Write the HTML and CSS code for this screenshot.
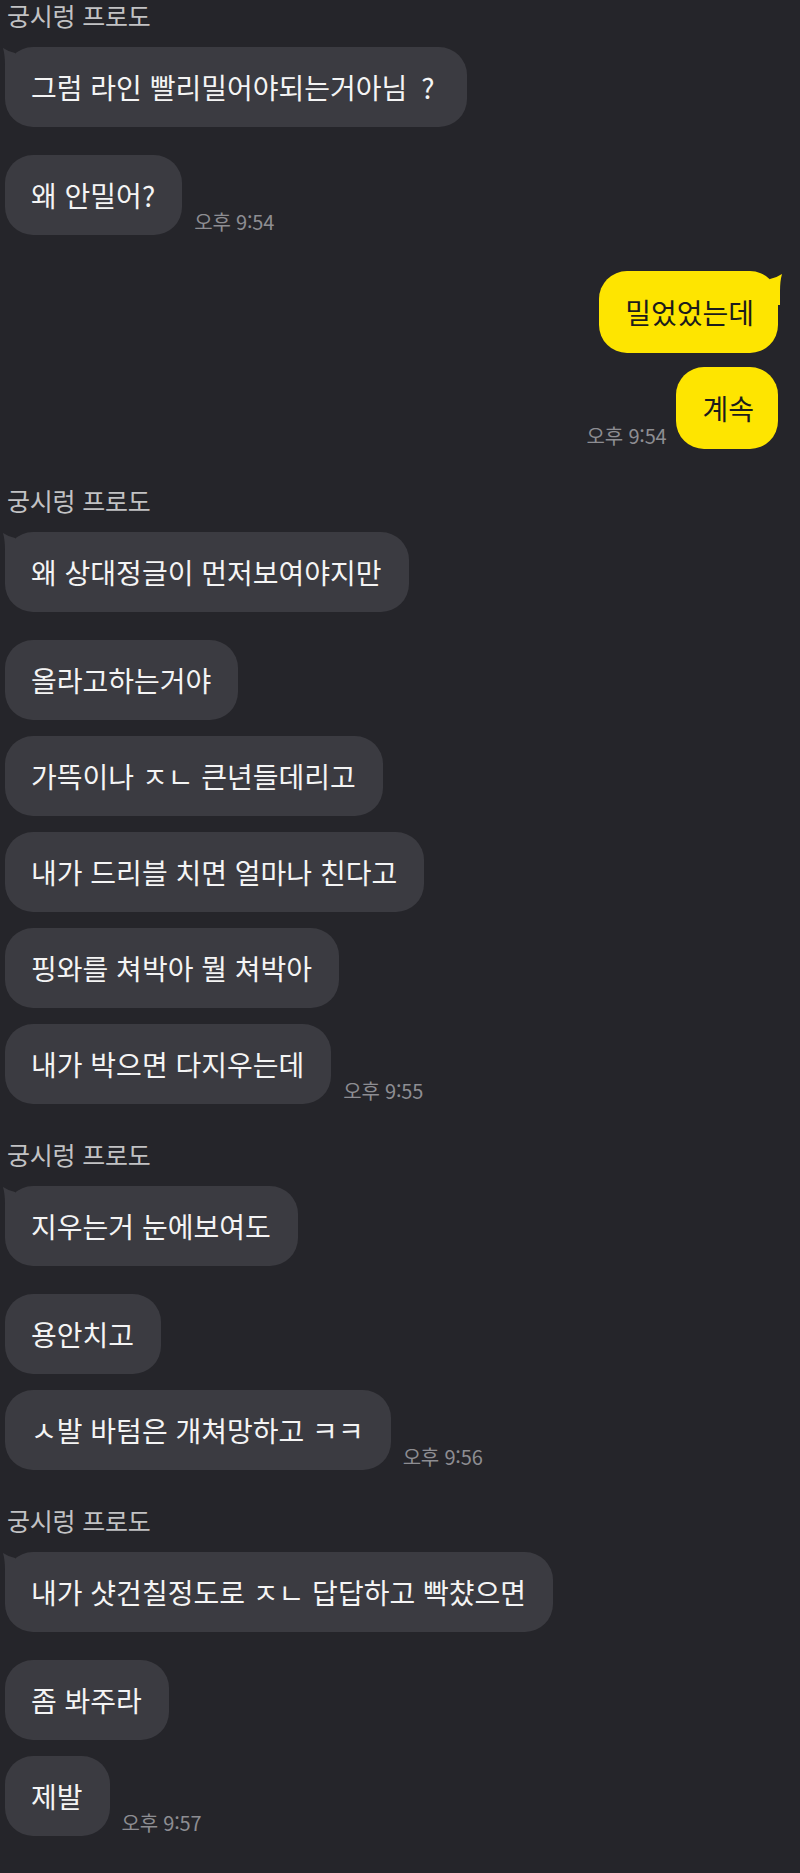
FILE: index.html
```html
<!DOCTYPE html>
<html lang="ko">
<head>
<meta charset="utf-8">
<link rel="stylesheet" href="styles.css">
</head>
<body>
<div class="chat">
  <section class="group in">
    <div class="name">궁시렁 프로도</div>
    <div class="row first"><div class="bubble"><svg class="horn" viewBox="0 0 16 32"><path d="M1 1 Q7 5 13 6 L13 32 L3 32 L3 18 Q3 8 1 1 Z"/></svg>그럼 라인 빨리밀어야되는거아님 <span class="q">?</span></div></div>
    <div class="row"><div class="bubble">왜 안밀어?</div><span class="time">오후 9:54</span></div>
  </section>

  <section class="group out">
    <div class="row first"><div class="bubble"><svg class="horn" viewBox="0 0 16 32"><path d="M15 1 Q9 5 3 6 L3 32 L13 32 L13 18 Q13 8 15 1 Z"/></svg>밀었었는데</div></div>
    <div class="row"><span class="time">오후 9:54</span><div class="bubble">계속</div></div>
  </section>

  <section class="group in">
    <div class="name">궁시렁 프로도</div>
    <div class="row first"><div class="bubble"><svg class="horn" viewBox="0 0 16 32"><path d="M1 1 Q7 5 13 6 L13 32 L3 32 L3 18 Q3 8 1 1 Z"/></svg>왜 상대정글이 먼저보여야지만</div></div>
    <div class="row"><div class="bubble">올라고하는거야</div></div>
    <div class="row"><div class="bubble">가뜩이나 ㅈㄴ 큰년들데리고</div></div>
    <div class="row"><div class="bubble">내가 드리블 치면 얼마나 친다고</div></div>
    <div class="row"><div class="bubble">핑와를 쳐박아 뭘 쳐박아</div></div>
    <div class="row"><div class="bubble">내가 박으면 다지우는데</div><span class="time">오후 9:55</span></div>
  </section>

  <section class="group in">
    <div class="name">궁시렁 프로도</div>
    <div class="row first"><div class="bubble"><svg class="horn" viewBox="0 0 16 32"><path d="M1 1 Q7 5 13 6 L13 32 L3 32 L3 18 Q3 8 1 1 Z"/></svg>지우는거 눈에보여도</div></div>
    <div class="row"><div class="bubble">용안치고</div></div>
    <div class="row"><div class="bubble">ㅅ발 바텀은 개쳐망하고 ㅋㅋ</div><span class="time">오후 9:56</span></div>
  </section>

  <section class="group in">
    <div class="name">궁시렁 프로도</div>
    <div class="row first"><div class="bubble"><svg class="horn" viewBox="0 0 16 32"><path d="M1 1 Q7 5 13 6 L13 32 L3 32 L3 18 Q3 8 1 1 Z"/></svg>내가 샷건칠정도로 ㅈㄴ 답답하고 빡챴으면</div></div>
    <div class="row"><div class="bubble">좀 봐주라</div></div>
    <div class="row"><div class="bubble">제발</div><span class="time">오후 9:57</span></div>
  </section>
</div>
</body>
</html>
```
FILE: styles.css
```css
html, body {
  margin: 0;
  padding: 0;
  background: #25252a;
}
body {
  width: 800px;
  min-height: 1873px;
  font-family: "Noto Sans CJK KR", "Noto Sans", sans-serif;
}
.chat {
  padding-top: 1px;
  display: flex;
  flex-direction: column;
}
.group {
  display: flex;
  flex-direction: column;
  gap: 16px;
  margin-bottom: 36px;
}
.group.in {
  padding-left: 5px;
  align-items: flex-start;
}
.group.out {
  padding-right: 22px;
  align-items: flex-end;
  gap: 14px;
  margin-bottom: 37px;
}
.name {
  font-size: 25px;
  line-height: 28px;
  color: #c2c2c4;
  padding-left: 2px;
  margin-bottom: 2px;
  letter-spacing: -0.2px;
}
.row {
  display: flex;
  align-items: flex-end;
  gap: 12px;
}
.row.first {
  margin-bottom: 12px;
}
.out .row.first {
  margin-bottom: 0;
}
.bubble {
  position: relative;
  font-size: 28px;
  line-height: 32px;
  padding: 24px 27px 24px 26px;
  border-radius: 28px;
  background: #3b3b41;
  color: #f4f4f4;
  white-space: nowrap;
}
.q {
  margin-left: 6px;
  margin-right: 6px;
}
.out .bubble {
  background: #fee500;
  color: #1c1c1c;
  padding: 25px 24px 25px 26px;
}
.horn {
  position: absolute;
  top: 0;
  width: 16px;
  height: 32px;
  fill: #3b3b41;
}
.in .horn {
  left: -3px;
}
.out .horn {
  right: -5px;
  top: 2px;
  fill: #fee500;
}
.time {
  font-size: 20px;
  line-height: 22px;
  color: #8d8d92;
  padding-bottom: 2px;
  white-space: nowrap;
  letter-spacing: -0.2px;
}
.out .time {
  margin-right: -2px;
}
```
